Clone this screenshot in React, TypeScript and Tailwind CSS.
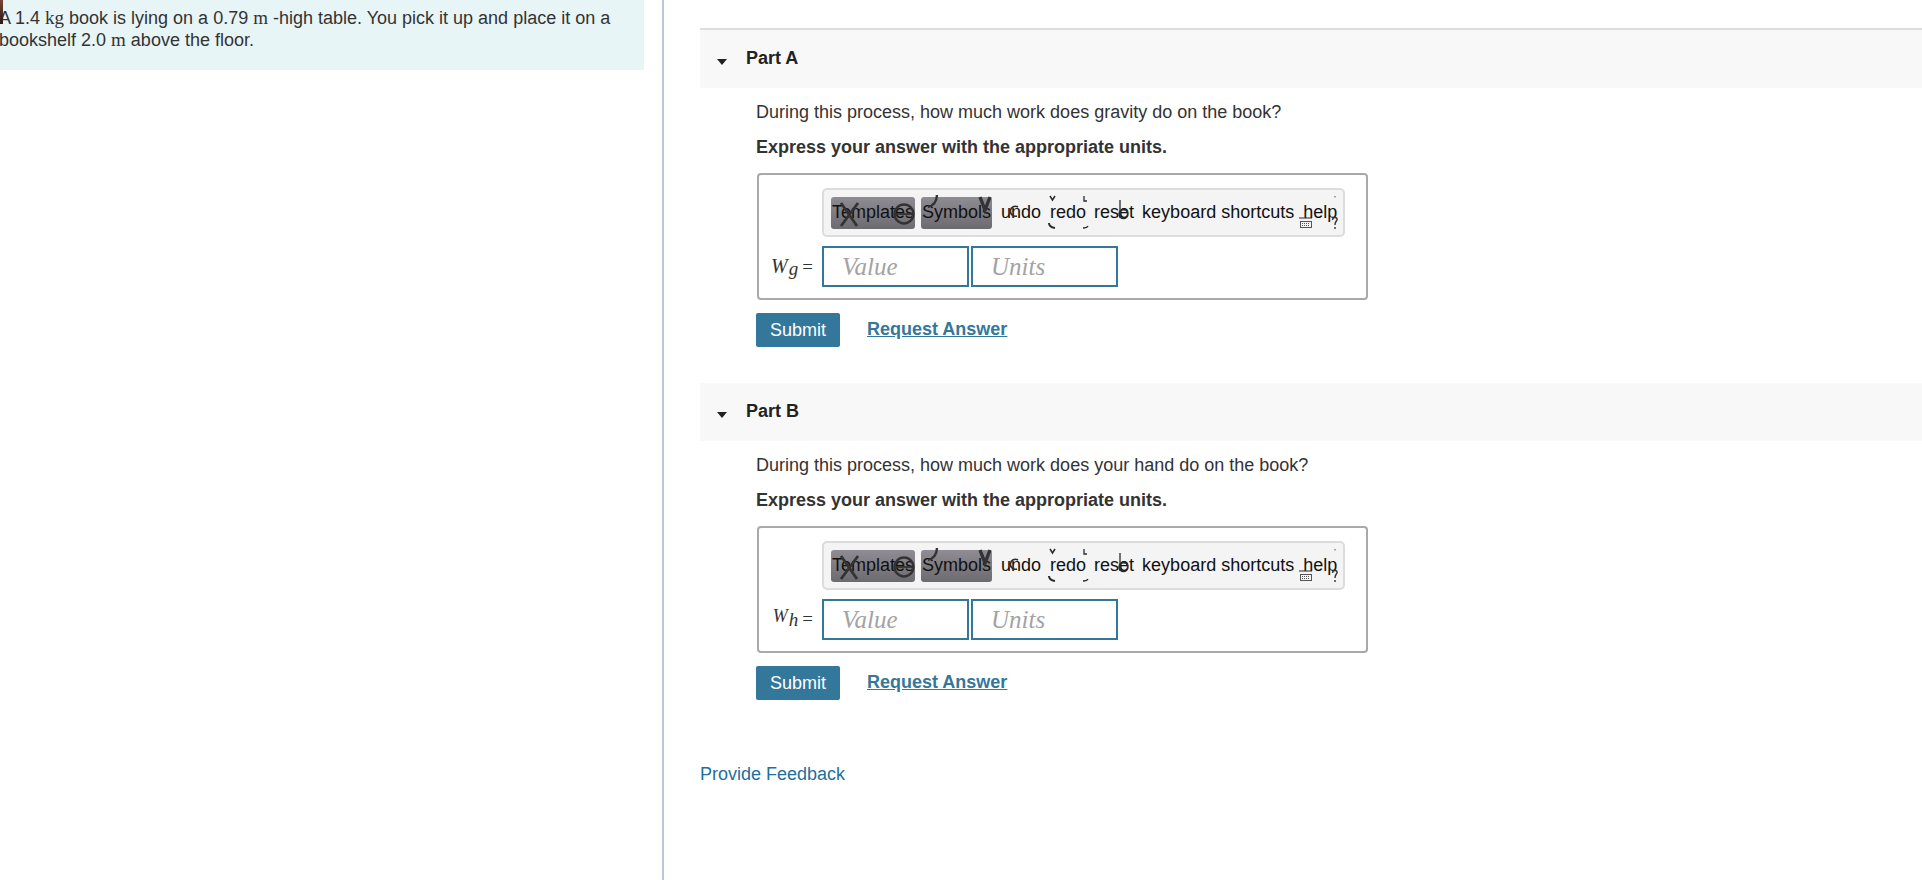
const SANS = 'font-["Liberation_Sans",Arial,sans-serif]';

function Unit({ children }: { children: string }) {
  return <span className='font-["Liberation_Serif",serif] text-[19px]'>{children}</span>;
}

// 読み込めなかったアイコンフォントの残骸をツールバーに重ねて描く
function ToolbarGlyphs() {
  return (
    <svg className="pointer-events-none absolute left-[-2px] top-[-2px]" width="523" height="49" fill="none" stroke="#2b2b2b">
      <path d="M19 15 L35 38 M36 15 L19 38" stroke="#333" strokeWidth="2.8" />
      <circle cx="82" cy="26" r="9.5" stroke="#333" strokeWidth="2.4" />
      <path d="M73 26 H91" stroke="#333" strokeWidth="1.8" />
      <path d="M115 7 Q114.5 17 106 19" stroke="#333" strokeWidth="2.4" />
      <path d="M158 9 L163 22 L168 9" stroke="#333" strokeWidth="3.4" />
      <path d="M196 19 A5 5 0 1 0 195 28" strokeWidth="1.6" />
      <path d="M228 8 L230.5 12 L233 8" strokeWidth="1.5" />
      <path d="M227 35 Q227 39 233 40" strokeWidth="2" />
      <path d="M262 8 V13 H265" strokeWidth="1.3" />
      <path d="M261 40 Q265 40 266 38" strokeWidth="1.3" />
      <path d="M298 12 V30" strokeWidth="1.3" />
      <circle cx="301.5" cy="26" r="4.3" strokeWidth="1.8" />
      <path d="M477 30 H490" strokeWidth="1" />
      <rect x="478.5" y="33.5" width="11" height="6" stroke="#555" strokeWidth="1" />
      <path d="M480 35.5 H488 M480 37.5 H488" stroke="#555" strokeWidth="1" strokeDasharray="1 1" />
      <path d="M510.5 32 Q511 29 513.5 29.5 Q516.5 30.5 514 33.5 Q513 35 513 37 M513 39 V41" stroke="#333" strokeWidth="1.4" />
      <path d="M513 8 V9.5" stroke="#555" strokeWidth="1" />
    </svg>
  );
}

function Toolbar() {
  return (
    <div className="relative ml-[63px] flex h-[49px] w-[523px] items-center rounded-[5px] border-2 border-[#dcdcdc] bg-[#f4f4f4] pl-[7px] text-[18px] text-[#111]">
      <div className="flex h-[32px] w-[84px] items-center justify-center rounded-[3px] bg-gradient-to-b from-[#8f8d93] to-[#6c6b70]">
        Templates
      </div>
      <div className="ml-[6px] flex h-[32px] w-[71px] items-center justify-center rounded-[3px] bg-gradient-to-b from-[#8f8d93] to-[#6c6b70]">
        Symbols
      </div>
      <span className="ml-[9px]">undo</span>
      <span className="ml-[9px]">redo</span>
      <span className="ml-[8px]">reset</span>
      <span className="ml-[8px]">keyboard shortcuts</span>
      <span className="ml-[9px]">help</span>
      <ToolbarGlyphs />
    </div>
  );
}

function AnswerBox({ sub }: { sub: 'g' | 'h' }) {
  return (
    <div className="ml-[1px] mt-[14px] h-[127px] w-[611px] rounded-[4px] border-2 border-[#a9a9a9] bg-white pt-[13px]">
      <Toolbar />
      <div className="mt-[9px] flex items-center">
        <div className='flex w-[63px] items-baseline justify-end pr-[9px] font-["Liberation_Serif",serif] text-[#333]'>
          <i className={sub === 'g' ? 'text-[20px]' : 'relative top-[-3px] text-[18px]'}>W</i>
          <i className={`relative ml-[1px] text-[19px] leading-none ${sub === 'g' ? 'top-[2px]' : 'top-[1px]'}`}>{sub}</i>
          <span className="ml-[4px] text-[19px]">=</span>
        </div>
        {['Value', 'Units'].map((label, i) => (
          <div
            key={label}
            className={`flex h-[41px] w-[147px] items-center border-2 border-[#33779b] pl-[18px] font-["Liberation_Serif",serif] text-[25px] italic text-[#a3a3a3] ${i ? 'ml-[2px]' : ''}`}
          >
            {label}
          </div>
        ))}
      </div>
    </div>
  );
}

function PartSection({ name, question, sub }: { name: string; question: string; sub: 'g' | 'h' }) {
  return (
    <section>
      <div className="flex h-[58px] items-center bg-[#f8f8f8] pb-[2px]">
        <span className="ml-[17px] mt-[7px] h-0 w-0 border-x-[5.5px] border-t-[6px] border-x-transparent border-t-[#222]" />
        <h2 className="ml-[19px] text-[18px] font-bold text-[#222]">{name}</h2>
      </div>
      <div className="pl-[56px]">
        <p className="mt-[12px] text-[18px] leading-[24px] text-[#333]">{question}</p>
        <p className="mt-[11px] text-[18px] font-bold leading-[24px] text-[#333]">Express your answer with the appropriate units.</p>
        <AnswerBox sub={sub} />
        <div className="mt-[13px] flex items-center">
          <button className="h-[34px] w-[84px] rounded-[2px] bg-[#33779b] text-[18px] text-white">Submit</button>
          <a className="mb-[2px] ml-[27px] text-[18px] font-bold text-[#33779b] underline">Request Answer</a>
        </div>
      </div>
    </section>
  );
}

export default function App() {
  return (
    <div className={`flex h-[880px] w-[1922px] overflow-hidden bg-white ${SANS}`}>
      <div className="w-[664px] shrink-0 border-r-2 border-[#b9c8dc]">
        <div className="relative h-[70px] w-[644px] bg-[#e8f5f7] pt-[7px] text-[18px] leading-[22px] text-[#333]">
          <p className="ml-[-1px]">
            <span className="block">
              A 1.4 <Unit>kg</Unit> book is lying on a 0.79 <Unit>m</Unit> -high table. You pick it up and place it on a
            </span>
            <span className="block">
              bookshelf 2.0 <Unit>m</Unit> above the floor.
            </span>
          </p>
          <div className="absolute left-0 top-0 h-[24px] w-[3px] bg-gradient-to-b from-[#7a4436] to-[#2a1a16]" />
        </div>
      </div>
      <main className="min-w-0 flex-1 pl-[36px] pt-[28px]">
        <div className="h-[2px] bg-[#dddddd]" />
        <PartSection name="Part A" question="During this process, how much work does gravity do on the book?" sub="g" />
        <div className="h-[36px]" />
        <PartSection name="Part B" question="During this process, how much work does your hand do on the book?" sub="h" />
        <a className="mt-[61px] block text-[18px] text-[#1f6f9c]">Provide Feedback</a>
      </main>
    </div>
  );
}
